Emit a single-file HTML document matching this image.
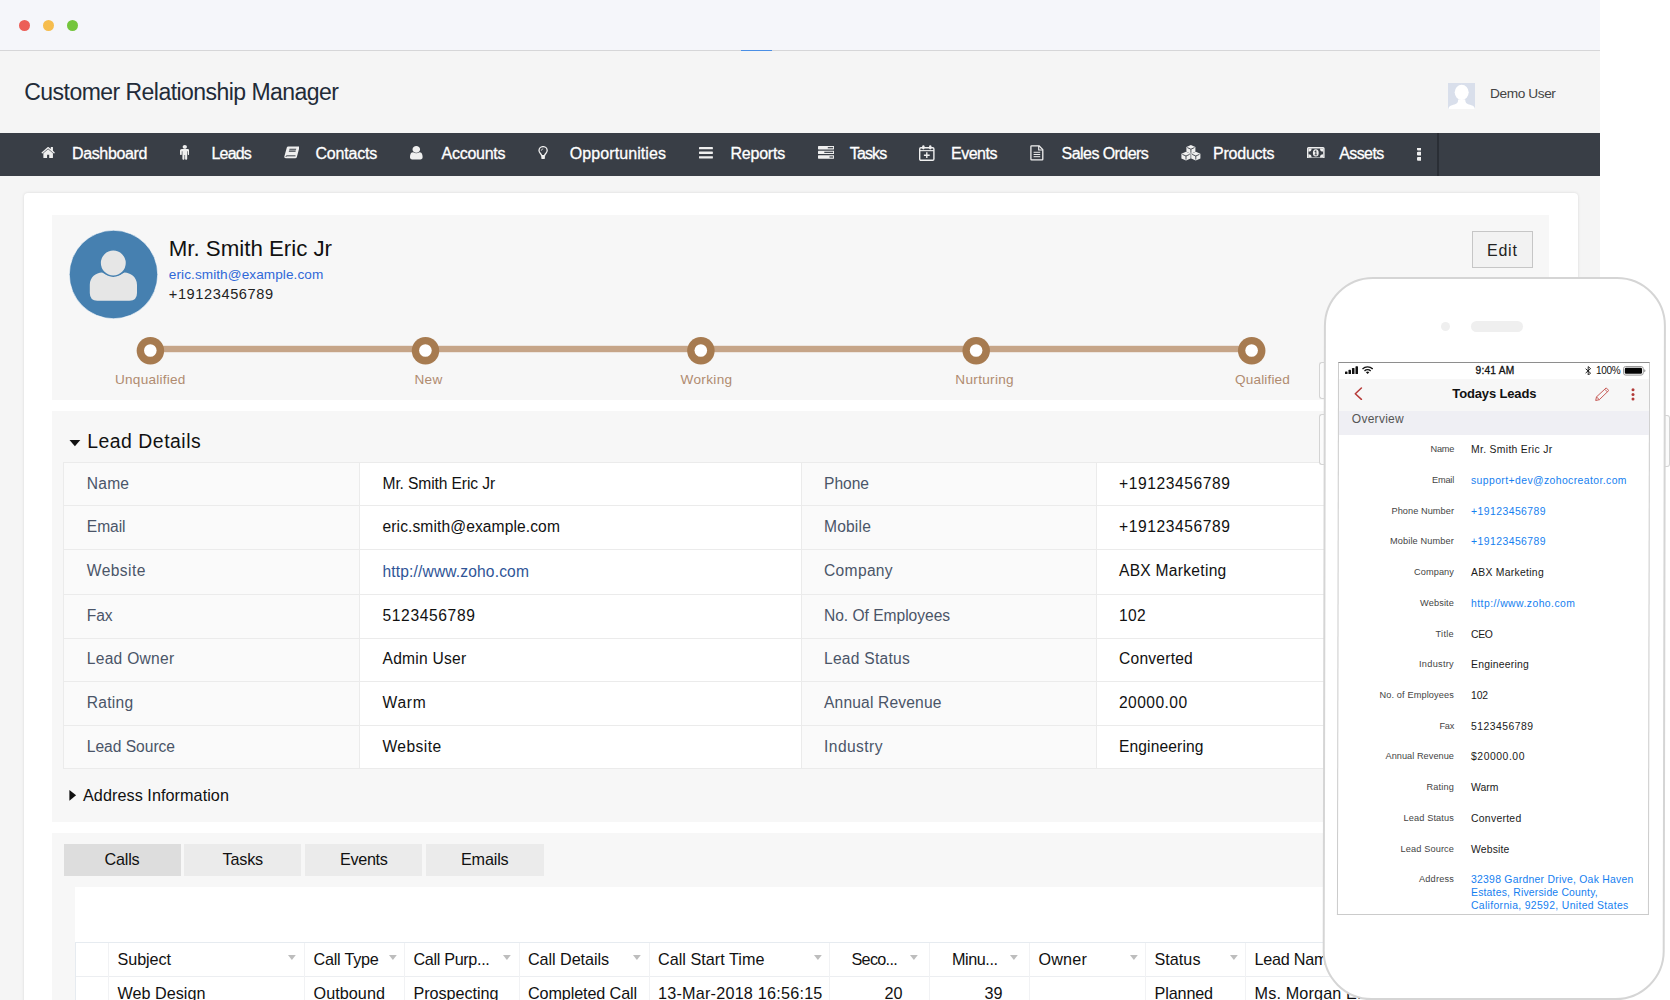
<!DOCTYPE html>
<html lang="en">
<head>
<meta charset="utf-8">
<title>Customer Relationship Manager</title>
<style>
html,body{margin:0;padding:0;background:#fff;}
body{width:1670px;height:1000px;position:relative;overflow:hidden;font-family:"Liberation Sans",sans-serif;}
.a{position:absolute;box-sizing:border-box;}
.t{position:absolute;white-space:pre;line-height:1;font-family:"Liberation Sans",sans-serif;}
#browser{left:0;top:0;width:1600px;height:1000px;background:#f5f5f5;overflow:hidden;}
#titlebar{left:0;top:0;width:1600px;height:51px;background:#f5f6fa;border-bottom:1px solid #d6d6d8;}
.dot{width:11px;height:11px;border-radius:50%;top:19.5px;}
#nav{left:0;top:133px;width:1600px;height:43px;background:#393e46;}
#card{left:24px;top:193px;width:1553.5px;height:820px;background:#fff;border-radius:4px;box-shadow:0 0 3px rgba(0,0,0,.12);}
.panel{left:52.3px;width:1497.2px;background:#f7f7f7;}
.tab{top:844px;height:32.4px;width:117.6px;background:#ebebeb;}
.vl{width:1px;background:#ebebeb;}
.hl{height:1px;background:#ebebeb;}
.gl{background:#e6ebf0 !important;}
.gv{background:#f1f2f4 !important;}
.lab{background:#fafafa;}
.val{background:#fff;}
.nv{-webkit-text-stroke:.3px #fff;}
.sb{-webkit-text-stroke:.3px #111;}
</style>
</head>
<body>
<div class="a" id="browser">
  <div class="a" id="titlebar"></div>
  <div class="a dot" style="left:19px;background:#ec5f58;"></div>
  <div class="a dot" style="left:43px;background:#f6bd4e;"></div>
  <div class="a dot" style="left:67px;background:#74c53c;"></div>
  <div class="a" style="left:740.5px;top:49.5px;width:31.5px;height:1.5px;background:#4a8fe6;"></div>
  <!-- user avatar -->
  <svg class="a" style="left:1448px;top:82.8px;" width="27.2" height="26.3" viewBox="0 0 27.2 26.3">
    <rect width="27.2" height="26.3" fill="#d9dfeb"/>
    <ellipse cx="13.7" cy="9.3" rx="7" ry="7.6" fill="#fff"/>
    <path d="M.4 26.3C.4 23.2 3 22.4 6.5 21.5 9 20.8 10.1 19.6 10.2 16.5H17.2C17.3 19.6 18.4 20.8 20.9 21.5 24.4 22.4 26.9 23.2 26.9 26.3z" fill="#fff"/>
  </svg>
  <div class="a" id="nav"></div>
  <div class="a" style="left:1437px;top:133px;width:1.5px;height:43px;background:#2a2e35;"></div>
    <!-- nav icons -->
  <svg class="a" id="ic-home" style="left:40.9px;top:147px;" width="14.3" height="11.1" viewBox="35 256 1722 1280" preserveAspectRatio="none"><path fill="#efefef" d="M1472 992v480q0 26-19 45t-45 19h-384v-384h-256v384h-384q-26 0-45-19t-19-45v-480q0-1 .5-3t.5-3l575-474 575 474q1 2 1 6zm223-69l-62 74q-8 9-21 11h-3q-13 0-21-7l-692-577-692 577q-12 8-24 7-13-2-21-11l-62-74q-8-10-7-23.5t11-21.5l719-599q32-26 76-26t76 26l244 204v-195q0-14 9-23t23-9h192q14 0 23 9t9 23v408l219 182q10 8 11 21.5t-7 23.5z"/></svg>
  <svg class="a" id="ic-male" style="left:179.8px;top:145.2px;" width="9.6" height="14.8" viewBox="384 32 1024 1760" preserveAspectRatio="none"><path fill="#efefef" d="M1408 704v416q0 40-28 68t-68 28-68-28-28-68v-352h-64v912q0 46-33 79t-79 33-79-33-33-79v-464h-64v464q0 46-33 79t-79 33-79-33-33-79v-912h-64v352q0 40-28 68t-68 28-68-28-28-68v-416q0-80 56-136t136-56h640q80 0 136 56t56 136zm-288-448q0 93-65.5 158.5t-158.5 65.5-158.5-65.5-65.5-158.5 65.5-158.5 158.5-65.5 158.5 65.5 65.5 158.5z"/></svg>
  <svg class="a" id="ic-book" style="left:283.7px;top:146.2px;" width="15.6" height="13.5" viewBox="0 0 16 13.5"><path fill="#efefef" d="M4.3 0.3H15q1.1 0 .8 1.1L13.2 11.2q-.4 1.3-1.7 1.3H2.3Q-.2 12.5.4 10.3L2.9 1.4Q3.2.3 4.3.3z"/><path fill="#393e46" d="M5.7 2.6h6.9l-.3 1.1H5.4zM5.2 4.5h6.9l-.3 1.1H4.9z"/><path fill="none" stroke="#393e46" stroke-width="1" d="M11.8 9.9H2.9q-1.1 0-.9 1"/></svg>
  <svg class="a" id="ic-user" style="left:410.2px;top:146px;" width="12.6" height="13.5" viewBox="256 128 1280 1536" preserveAspectRatio="none"><path fill="#efefef" d="M1536 1399q0 109-62.5 187t-150.5 78h-854q-88 0-150.5-78t-62.5-187q0-85 8.5-160.5t31.5-152 58.5-131 94-89 134.5-34.5q131 128 313 128t313-128q76 0 134.5 34.5t94 89 58.5 131 31.5 152 8.5 160.5zm-256-887q0 159-112.5 271.5t-271.5 112.5-271.5-112.5-112.5-271.5 112.5-271.5 271.5-112.5 271.5 112.5 112.5 271.5z"/></svg>
  <svg class="a" id="ic-bulb" style="left:538.1px;top:145.9px;" width="10.2" height="13.6" viewBox="0 0 10.2 13.6"><path fill="none" stroke="#efefef" stroke-width="1.3" d="M3.6 9.6C3.6 7.8 1 7 1 4.6A4.1 4 0 0 1 9.2 4.6C9.2 7 6.6 7.8 6.6 9.6z"/><path fill="#efefef" d="M3.3 9.6h3.6v2.3q0 1.4-1.8 1.4t-1.8-1.4z"/><path fill="none" stroke="#efefef" stroke-width=".7" d="M3.3 4.8A1.9 1.9 0 0 1 5.2 2.9"/></svg>
  <svg class="a" id="ic-bars" style="left:698.9px;top:147px;" width="13.9" height="11.5" viewBox="128 256 1536 1280" preserveAspectRatio="none"><path fill="#efefef" d="M1664 1344v128q0 26-19 45t-45 19h-1408q-26 0-45-19t-19-45v-128q0-26 19-45t45-19h1408q26 0 45 19t19 45zm0-512v128q0 26-19 45t-45 19h-1408q-26 0-45-19t-19-45v-128q0-26 19-45t45-19h1408q26 0 45 19t19 45zm0-512v128q0 26-19 45t-45 19h-1408q-26 0-45-19t-19-45v-128q0-26 19-45t45-19h1408q26 0 45 19t19 45z"/></svg>
  <svg class="a" id="ic-tasks" style="left:817.9px;top:145.9px;" width="16.2" height="12.7" viewBox="0 0 16.2 12.7"><g fill="#efefef"><rect x="0" y="0" width="16.2" height="3.4" rx=".6"/><rect x="0" y="4.65" width="16.2" height="3.4" rx=".6"/><rect x="0" y="9.3" width="16.2" height="3.4" rx=".6"/></g><g fill="#393e46"><rect x="9.8" y="1.1" width="5.3" height="1.2"/><rect x="6.3" y="5.75" width="8.8" height="1.2"/><rect x="11.5" y="10.4" width="3.6" height="1.2"/></g></svg>
  <svg class="a" id="ic-cal" style="left:919px;top:144.7px;" width="15.6" height="16" viewBox="0 0 15.6 16"><rect x=".7" y="2.7" width="14.2" height="12.6" rx="1.2" fill="none" stroke="#efefef" stroke-width="1.4"/><rect x=".7" y="5.1" width="14.2" height="1.1" fill="#efefef"/><rect x="3.2" y=".2" width="2.3" height="4.2" rx="1.1" fill="#efefef"/><rect x="10.1" y=".2" width="2.3" height="4.2" rx="1.1" fill="#efefef"/><path fill="#efefef" d="M7.1 7.3h1.4v2.2h2.2v1.4H8.5v2.2H7.1v-2.2H4.9V9.5h2.2z"/></svg>
  <svg class="a" id="ic-file" style="left:1029.7px;top:145px;" width="14.3" height="15.7" viewBox="0 0 14.3 15.7"><path fill="none" stroke="#efefef" stroke-width="1.3" stroke-linejoin="round" d="M1.6.8H9l3.8 3.8V14.2q0 .7-.7.7H1.6q-.7 0-.7-.7V1.5q0-.7.7-.7z"/><path fill="none" stroke="#efefef" stroke-width="1.1" d="M8.7.9V5h4"/><path fill="none" stroke="#efefef" stroke-width="1" d="M3.6 7.3h6.6M3.6 9.5h6.6M3.6 11.7h6.6"/></svg>
  <svg class="a" id="ic-cubes" style="left:1181.3px;top:145px;" width="19.8" height="15.5" viewBox="0 0 19.8 15.5"><g fill="#efefef"><path d="M9.9 0l4.5 2v4.7L9.9 8.7 5.4 6.7V2z"/><path d="M5 6.8l4.6 2v4.7L5 15.5.4 13.5V8.8z"/><path d="M14.8 6.8l4.6 2v4.7l-4.6 2-4.6-2V8.8z"/></g><g fill="none" stroke="#393e46" stroke-width=".9"><path d="M6.3 2.6l3.6 1.6 3.6-1.6M9.9 4.2v3.6"/><path d="M1.4 9.4L5 11l3.6-1.6M5 11v3.6"/><path d="M11.2 9.4l3.6 1.6 3.6-1.6M14.8 11v3.6"/></g></svg>
  <svg class="a" id="ic-money" style="left:1307.2px;top:146.7px;" width="17.6" height="11.8" viewBox="0 0 17.6 11.8"><rect x=".7" y=".7" width="16.2" height="10.4" rx=".8" fill="none" stroke="#efefef" stroke-width="1.4"/><path fill="#efefef" d="M1.4 1.4h3.2A3.2 3.2 0 0 1 1.4 4.6zM16.2 1.4h-3.2A3.2 3.2 0 0 0 16.2 4.6zM1.4 10.4h3.2A3.2 3.2 0 0 0 1.4 7.2zM16.2 10.4h-3.2A3.2 3.2 0 0 1 16.2 7.2z"/><ellipse cx="8.8" cy="5.9" rx="2.9" ry="3.6" fill="#efefef"/><path fill="#393e46" d="M8.4 3.6h1v3.8h.8v.8H7.5v-.8h.9V4.8l-.8.4v-.9z"/></svg>
  <svg class="a" id="ic-kebab" style="left:1416.6px;top:148px;" width="4.8" height="12.7" viewBox="704 256 384 1280" preserveAspectRatio="none"><path fill="#efefef" d="M1088 1248v192q0 40-28 68t-68 28h-192q-40 0-68-28t-28-68v-192q0-40 28-68t68-28h192q40 0 68 28t28 68zm0-512v192q0 40-28 68t-68 28h-192q-40 0-68-28t-28-68v-192q0-40 28-68t68-28h192q40 0 68 28t28 68zm0-512v192q0 40-28 68t-68 28h-192q-40 0-68-28t-28-68v-192q0-40 28-68t68-28h192q40 0 68 28t28 68z"/></svg>

  <div class="a" id="card"></div>
  <!-- panel 1: profile -->
  <div class="a panel" style="top:214.7px;height:185.3px;"></div>
  <svg class="a" style="left:68.9px;top:230.3px;" width="89" height="89" viewBox="0 0 89 89">
    <circle cx="44.5" cy="44.5" r="44.2" fill="#4680b0" stroke="#fff" stroke-width=".6"/>
    <path d="M20.8 63V55C20.8 47 27 43 33 42.6Q44.4 50 55.5 42.6C61.5 43 68 47 68 55V63Q68 70.7 60.5 70.7H28.3Q20.8 70.7 20.8 63z" fill="#e6e6e6"/>
    <circle cx="44.3" cy="33" r="13.2" fill="#e6e6e6" stroke="#4680b0" stroke-width="1.5"/>
  </svg>
  <svg class="a" style="left:130px;top:330px;" width="1140" height="42" viewBox="130 330 1140 42">
    <rect x="150" y="345.8" width="1101" height="6.4" fill="#c6a588"/>
    <circle cx="150.4" cy="350.7" r="13.75" fill="#a77b50"/><circle cx="150.3" cy="350.5" r="6.3" fill="#fff"/>
    <circle cx="425.5" cy="350.7" r="13.75" fill="#a77b50"/><circle cx="425.4" cy="350.5" r="6.3" fill="#fff"/>
    <circle cx="700.9" cy="350.7" r="13.75" fill="#a77b50"/><circle cx="700.8" cy="350.5" r="6.3" fill="#fff"/>
    <circle cx="976.2" cy="350.7" r="13.75" fill="#a77b50"/><circle cx="976.1" cy="350.5" r="6.3" fill="#fff"/>
    <circle cx="1251.7" cy="350.7" r="13.75" fill="#a77b50"/><circle cx="1251.6000000000001" cy="350.5" r="6.3" fill="#fff"/>
  </svg>
  <div class="a" style="left:1472px;top:231px;width:61px;height:37px;border:1px solid #c6c6c6;background:#f2f2f2;"></div>
  <!-- panel 2: lead details -->
  <div class="a panel" style="top:411.4px;height:410.2px;"></div>
  <svg class="a" style="left:68px;top:438px;" width="14" height="10" viewBox="68 438 14 10"><path d="M69.5 440h10.8l-5.4 6.2z" fill="#111"/></svg>
  <svg class="a" style="left:68px;top:788px;" width="10" height="14" viewBox="68 788 10 14"><path d="M69.4 789.9v10.8l6.7-5.4z" fill="#111"/></svg>
  <!-- table -->
  <div class="a lab" style="left:63px;top:462px;width:296px;height:306.5px;"></div>
  <div class="a val" style="left:359px;top:462px;width:442px;height:306.5px;"></div>
  <div class="a lab" style="left:801px;top:462px;width:295px;height:306.5px;"></div>
  <div class="a val" style="left:1096px;top:462px;width:442px;height:306.5px;"></div>
  <div class="a vl" style="left:63px;top:462px;height:306.5px;"></div>
  <div class="a vl" style="left:359px;top:462px;height:306.5px;"></div>
  <div class="a vl" style="left:801px;top:462px;height:306.5px;"></div>
  <div class="a vl" style="left:1096px;top:462px;height:306.5px;"></div>
  <div class="a hl" style="left:63px;top:462px;width:1475px;"></div>
  <div class="a hl" style="left:63px;top:505px;width:1475px;"></div>
  <div class="a hl" style="left:63px;top:549px;width:1475px;"></div>
  <div class="a hl" style="left:63px;top:593.5px;width:1475px;"></div>
  <div class="a hl" style="left:63px;top:637.5px;width:1475px;"></div>
  <div class="a hl" style="left:63px;top:681px;width:1475px;"></div>
  <div class="a hl" style="left:63px;top:724.5px;width:1475px;"></div>
  <div class="a hl" style="left:63px;top:768px;width:1475px;"></div>
  <!-- panel 3: related lists -->
  <div class="a panel" style="top:833px;height:180px;"></div>
  <div class="a tab" style="left:63.6px;background:#dddddd;"></div>
  <div class="a tab" style="left:183.6px;"></div>
  <div class="a tab" style="left:304.8px;"></div>
  <div class="a tab" style="left:426px;"></div>
  <div class="a" style="left:74.7px;top:887.2px;width:1463px;height:120px;background:#fff;"></div>
  <div class="a hl gl" style="left:75px;top:942px;width:1463px;"></div>
  <div class="a hl gl" style="left:75px;top:976px;width:1463px;background:#eceef1 !important;"></div>
  <div class="a vl gl" style="left:75px;top:943px;height:60px;"></div>
  <div class="a vl gv" style="left:108px;top:943px;height:60px;"></div>
  <div class="a vl gv" style="left:304px;top:943px;height:60px;"></div>
  <div class="a vl gv" style="left:404px;top:943px;height:60px;"></div>
  <div class="a vl gv" style="left:518.6px;top:943px;height:60px;"></div>
  <div class="a vl gv" style="left:649px;top:943px;height:60px;"></div>
  <div class="a vl gv" style="left:829px;top:943px;height:60px;"></div>
  <div class="a vl gv" style="left:928.6px;top:943px;height:60px;"></div>
  <div class="a vl gv" style="left:1028.6px;top:943px;height:60px;"></div>
  <div class="a vl gv" style="left:1144.6px;top:943px;height:60px;"></div>
  <div class="a vl gv" style="left:1244.6px;top:943px;height:60px;"></div>
  <svg class="a" style="left:287px;top:954px;" width="10" height="7" viewBox="0 0 10 7"><path d="M1 1h7.8L4.9 5.9z" fill="#bdbdbd"/></svg>
  <svg class="a" style="left:387.5px;top:954px;" width="10" height="7" viewBox="0 0 10 7"><path d="M1 1h7.8L4.9 5.9z" fill="#bdbdbd"/></svg>
  <svg class="a" style="left:501.7px;top:954px;" width="10" height="7" viewBox="0 0 10 7"><path d="M1 1h7.8L4.9 5.9z" fill="#bdbdbd"/></svg>
  <svg class="a" style="left:631.7px;top:954px;" width="10" height="7" viewBox="0 0 10 7"><path d="M1 1h7.8L4.9 5.9z" fill="#bdbdbd"/></svg>
  <svg class="a" style="left:812.5px;top:954px;" width="10" height="7" viewBox="0 0 10 7"><path d="M1 1h7.8L4.9 5.9z" fill="#bdbdbd"/></svg>
  <svg class="a" style="left:908.7px;top:954px;" width="10" height="7" viewBox="0 0 10 7"><path d="M1 1h7.8L4.9 5.9z" fill="#bdbdbd"/></svg>
  <svg class="a" style="left:1008.7px;top:954px;" width="10" height="7" viewBox="0 0 10 7"><path d="M1 1h7.8L4.9 5.9z" fill="#bdbdbd"/></svg>
  <svg class="a" style="left:1128.5px;top:954px;" width="10" height="7" viewBox="0 0 10 7"><path d="M1 1h7.8L4.9 5.9z" fill="#bdbdbd"/></svg>
  <svg class="a" style="left:1228.5px;top:954px;" width="10" height="7" viewBox="0 0 10 7"><path d="M1 1h7.8L4.9 5.9z" fill="#bdbdbd"/></svg>
<span class="t " style="left:24.3px;top:81.00px;font-size:23px;color:#222b38;letter-spacing:-0.54px;">Customer Relationship Manager</span>
<span class="t " style="left:1490.0px;top:87.00px;font-size:13.7px;color:#444;letter-spacing:-0.41px;">Demo User</span>
<span class="t nv" style="left:72.0px;top:146.00px;font-size:16px;color:#ffffff;letter-spacing:-0.36px;">Dashboard</span>
<span class="t nv" style="left:211.5px;top:146.00px;font-size:16px;color:#ffffff;letter-spacing:-0.82px;">Leads</span>
<span class="t nv" style="left:315.5px;top:146.00px;font-size:16px;color:#ffffff;letter-spacing:-0.21px;">Contacts</span>
<span class="t nv" style="left:441.5px;top:146.00px;font-size:16px;color:#ffffff;letter-spacing:-0.25px;">Accounts</span>
<span class="t nv" style="left:569.8px;top:146.00px;font-size:16px;color:#ffffff;letter-spacing:0.08px;">Opportunities</span>
<span class="t nv" style="left:730.5px;top:146.00px;font-size:16px;color:#ffffff;letter-spacing:-0.22px;">Reports</span>
<span class="t nv" style="left:849.8px;top:146.00px;font-size:16px;color:#ffffff;letter-spacing:-0.88px;">Tasks</span>
<span class="t nv" style="left:951.0px;top:146.00px;font-size:16px;color:#ffffff;letter-spacing:-0.49px;">Events</span>
<span class="t nv" style="left:1061.6px;top:146.00px;font-size:16px;color:#ffffff;letter-spacing:-0.56px;">Sales Orders</span>
<span class="t nv" style="left:1213.0px;top:146.00px;font-size:16px;color:#ffffff;letter-spacing:-0.23px;">Products</span>
<span class="t nv" style="left:1339.2px;top:146.00px;font-size:16px;color:#ffffff;letter-spacing:-0.59px;">Assets</span>
<span class="t " style="left:168.8px;top:238.00px;font-size:22.3px;color:#111;letter-spacing:-0.02px;">Mr. Smith Eric Jr</span>
<span class="t " style="left:168.8px;top:268.00px;font-size:13.6px;color:#2f68d8;letter-spacing:0.08px;">eric.smith@example.com</span>
<span class="t " style="left:168.8px;top:287.00px;font-size:14.6px;color:#222;letter-spacing:0.59px;">+19123456789</span>
<span class="t " style="left:115.0px;top:373.00px;font-size:13.6px;color:#b08b70;letter-spacing:0.23px;">Unqualified</span>
<span class="t " style="left:414.5px;top:373.00px;font-size:13.6px;color:#b08b70;letter-spacing:0.27px;">New</span>
<span class="t " style="left:680.5px;top:373.00px;font-size:13.6px;color:#b08b70;letter-spacing:0.34px;">Working</span>
<span class="t " style="left:955.3px;top:373.00px;font-size:13.6px;color:#b08b70;letter-spacing:0.31px;">Nurturing</span>
<span class="t " style="left:1235.0px;top:373.00px;font-size:13.6px;color:#b08b70;letter-spacing:0.15px;">Qualified</span>
<span class="t " style="left:1487.0px;top:243.00px;font-size:16px;color:#222;letter-spacing:0.76px;">Edit</span>
<span class="t " style="left:87.2px;top:432.00px;font-size:19.4px;color:#111;letter-spacing:0.52px;">Lead Details</span>
<span class="t " style="left:86.8px;top:476.00px;font-size:15.6px;color:#4a5568;letter-spacing:0.2px;">Name</span>
<span class="t " style="left:382.5px;top:476.00px;font-size:15.6px;color:#111;letter-spacing:-0.11px;">Mr. Smith Eric Jr</span>
<span class="t " style="left:824.0px;top:476.00px;font-size:15.6px;color:#4a5568;letter-spacing:-0.02px;">Phone</span>
<span class="t " style="left:1119.0px;top:476.00px;font-size:15.6px;color:#111;letter-spacing:0.58px;">+19123456789</span>
<span class="t " style="left:86.8px;top:519.00px;font-size:15.6px;color:#4a5568;letter-spacing:-0.06px;">Email</span>
<span class="t " style="left:382.5px;top:519.00px;font-size:15.6px;color:#111;letter-spacing:0.1px;">eric.smith@example.com</span>
<span class="t " style="left:824.0px;top:519.00px;font-size:15.6px;color:#4a5568;letter-spacing:0.18px;">Mobile</span>
<span class="t " style="left:1119.0px;top:519.00px;font-size:15.6px;color:#111;letter-spacing:0.58px;">+19123456789</span>
<span class="t " style="left:86.8px;top:563.00px;font-size:15.6px;color:#4a5568;letter-spacing:0.41px;">Website</span>
<span class="t " style="left:382.5px;top:564.00px;font-size:15.6px;color:#2f5597;letter-spacing:0.14px;">http://www.zoho.com</span>
<span class="t " style="left:824.0px;top:563.00px;font-size:15.6px;color:#4a5568;letter-spacing:0.32px;">Company</span>
<span class="t " style="left:1119.0px;top:563.00px;font-size:15.6px;color:#111;letter-spacing:0.27px;">ABX Marketing</span>
<span class="t " style="left:86.8px;top:608.00px;font-size:15.6px;color:#4a5568;letter-spacing:-0.1px;">Fax</span>
<span class="t " style="left:382.5px;top:608.00px;font-size:15.6px;color:#111;letter-spacing:0.63px;">5123456789</span>
<span class="t " style="left:824.0px;top:608.00px;font-size:15.6px;color:#4a5568;letter-spacing:-0.03px;">No. Of Employees</span>
<span class="t " style="left:1119.0px;top:608.00px;font-size:15.6px;color:#111;letter-spacing:0.32px;">102</span>
<span class="t " style="left:86.8px;top:651.00px;font-size:15.6px;color:#4a5568;letter-spacing:0.27px;">Lead Owner</span>
<span class="t " style="left:382.5px;top:651.00px;font-size:15.6px;color:#111;letter-spacing:0.25px;">Admin User</span>
<span class="t " style="left:824.0px;top:651.00px;font-size:15.6px;color:#4a5568;letter-spacing:0.25px;">Lead Status</span>
<span class="t " style="left:1119.0px;top:651.00px;font-size:15.6px;color:#111;letter-spacing:0.23px;">Converted</span>
<span class="t " style="left:86.8px;top:695.00px;font-size:15.6px;color:#4a5568;letter-spacing:0.27px;">Rating</span>
<span class="t " style="left:382.5px;top:695.00px;font-size:15.6px;color:#111;letter-spacing:0.75px;">Warm</span>
<span class="t " style="left:824.0px;top:695.00px;font-size:15.6px;color:#4a5568;letter-spacing:0.16px;">Annual Revenue</span>
<span class="t " style="left:1119.0px;top:695.00px;font-size:15.6px;color:#111;letter-spacing:0.43px;">20000.00</span>
<span class="t " style="left:86.8px;top:739.00px;font-size:15.6px;color:#4a5568;letter-spacing:-0.02px;">Lead Source</span>
<span class="t " style="left:382.5px;top:739.00px;font-size:15.6px;color:#111;letter-spacing:0.42px;">Website</span>
<span class="t " style="left:824.0px;top:739.00px;font-size:15.6px;color:#4a5568;letter-spacing:0.44px;">Industry</span>
<span class="t " style="left:1119.0px;top:739.00px;font-size:15.6px;color:#111;letter-spacing:0.12px;">Engineering</span>
<span class="t " style="left:83.0px;top:787.00px;font-size:16.2px;color:#111;letter-spacing:0.06px;">Address Information</span>
<span class="t " style="left:104.5px;top:851.00px;font-size:16.2px;color:#111;letter-spacing:-0.2px;">Calls</span>
<span class="t " style="left:222.5px;top:851.00px;font-size:16.2px;color:#111;letter-spacing:-0.18px;">Tasks</span>
<span class="t " style="left:340.0px;top:851.00px;font-size:16.2px;color:#111;letter-spacing:-0.33px;">Events</span>
<span class="t " style="left:461.0px;top:851.00px;font-size:16.2px;color:#111;letter-spacing:-0.18px;">Emails</span>
<span class="t " style="left:117.5px;top:951.00px;font-size:16.2px;color:#111;letter-spacing:-0.07px;">Subject</span>
<span class="t " style="left:313.5px;top:951.00px;font-size:16.2px;color:#111;letter-spacing:-0.24px;">Call Type</span>
<span class="t " style="left:413.5px;top:951.00px;font-size:16.2px;color:#111;letter-spacing:-0.34px;">Call Purp...</span>
<span class="t " style="left:528.0px;top:951.00px;font-size:16.2px;color:#111;letter-spacing:-0.07px;">Call Details</span>
<span class="t " style="left:658.0px;top:951.00px;font-size:16.2px;color:#111;letter-spacing:0.02px;">Call Start Time</span>
<span class="t " style="left:851.5px;top:951.00px;font-size:16.2px;color:#111;letter-spacing:-0.7px;">Seco...</span>
<span class="t " style="left:952.0px;top:951.00px;font-size:16.2px;color:#111;letter-spacing:-0.44px;">Minu...</span>
<span class="t " style="left:1038.5px;top:951.00px;font-size:16.2px;color:#111;letter-spacing:0.16px;">Owner</span>
<span class="t " style="left:1154.5px;top:951.00px;font-size:16.2px;color:#111;letter-spacing:0.02px;">Status</span>
<span class="t " style="left:1254.5px;top:951.00px;font-size:16.2px;color:#111;letter-spacing:-0.24px;">Lead Name</span>
<span class="t " style="left:117.5px;top:985.00px;font-size:16.2px;color:#111;letter-spacing:0.01px;">Web Design</span>
<span class="t " style="left:313.5px;top:985.00px;font-size:16.2px;color:#111;letter-spacing:0.05px;">Outbound</span>
<span class="t " style="left:413.5px;top:985.00px;font-size:16.2px;color:#111;letter-spacing:-0.04px;">Prospecting</span>
<span class="t " style="left:528.0px;top:985.00px;font-size:16.2px;color:#111;letter-spacing:-0.12px;">Completed Call</span>
<span class="t " style="left:658.0px;top:985.00px;font-size:16.2px;color:#111;letter-spacing:0.22px;">13-Mar-2018 16:56:15</span>
<span class="t " style="left:884.5px;top:985.00px;font-size:16.2px;color:#111;letter-spacing:-0.01px;">20</span>
<span class="t " style="left:984.5px;top:985.00px;font-size:16.2px;color:#111;letter-spacing:-0.01px;">39</span>
<span class="t " style="left:1154.5px;top:985.00px;font-size:16.2px;color:#111;letter-spacing:-0.13px;">Planned</span>
<span class="t " style="left:1254.5px;top:985.00px;font-size:16.2px;color:#111;letter-spacing:0.15px;">Ms. Morgan E...</span>
</div>
<!-- phone -->
<!-- phone side buttons -->
<div class="a" style="left:1319.2px;top:362.4px;width:6px;height:36.5px;border:1px solid #d4d4d4;border-right:none;border-radius:3px 0 0 3px;background:#fbfbfb;"></div>
<div class="a" style="left:1319.2px;top:414.2px;width:6px;height:51px;border:1px solid #d4d4d4;border-right:none;border-radius:3px 0 0 3px;background:#fbfbfb;"></div>
<div class="a" style="left:1664px;top:415px;width:5.8px;height:52px;border:1px solid #d4d4d4;border-left:none;border-radius:0 3px 3px 0;background:#fbfbfb;"></div>

<div class="a" id="phone" style="left:1323.9px;top:277px;width:341.5px;height:723px;border:2px solid #d5d5d5;border-radius:49px;transform-origin:0 0;transform:skewX(-.11deg);background:#fff;"></div>
<div class="a" style="left:1441.3px;top:321.5px;width:9px;height:9px;border-radius:50%;background:#efefef;"></div>
<div class="a" style="left:1471px;top:320.5px;width:51.5px;height:11.5px;border-radius:6px;background:#efefef;"></div>
<div class="a" id="screen" style="transform-origin:0 0;transform:skewX(-.11deg);left:1338.2px;top:362px;width:312px;height:552.5px;border:1px solid #cbcbcb;border-top-color:#8e8e8e;background:#fff;"></div>
<div class="a" style="left:1339px;top:378.5px;width:310px;height:32.5px;background:#f7f7f7;"></div>
<div class="a" style="left:1339px;top:411px;width:310px;height:23.5px;background:#efeff4;"></div>
<!-- status bar icons -->
<svg class="a" style="left:1345px;top:365.5px;" width="13.2" height="8.2" viewBox="0 0 13.2 8.2"><g fill="#111"><rect x="0" y="5.5" width="2.5" height="2.7" rx=".6"/><rect x="3.5" y="3.8" width="2.5" height="4.4" rx=".6"/><rect x="7" y="2" width="2.5" height="6.2" rx=".6"/><rect x="10.5" y=".3" width="2.5" height="7.9" rx=".6"/></g></svg>
<svg class="a" style="left:1362.2px;top:365.7px;" width="11.2" height="8" viewBox="0 0 11.2 8"><g fill="none" stroke="#111" stroke-width="1.35" stroke-linecap="butt"><path d="M.5 3A7.3 7.3 0 0 1 10.7 3"/><path d="M2.5 5A4.5 4.5 0 0 1 8.7 5"/></g><path fill="#111" d="M5.6 8L3.9 6.3A2.4 2.4 0 0 1 7.3 6.3z"/></svg>
<svg class="a" style="left:1584.7px;top:365.5px;" width="6.6" height="9.8" viewBox="0 0 6.6 9.8"><path fill="none" stroke="#111" stroke-width=".9" stroke-linejoin="miter" d="M.6 2.7L5.6 7.2 3.2 9.2V.6L5.6 2.6.6 7.1"/></svg>
<svg class="a" style="left:1623px;top:366px;" width="23" height="9.6" viewBox="0 0 23 9.6"><rect x=".5" y=".5" width="19.8" height="8.6" rx="2.2" fill="#fff" stroke="#999" stroke-width="1"/><rect x="1.8" y="1.8" width="17.2" height="6" rx="1.2" fill="#050505"/><path fill="#999" d="M21.1 3.3q1.4.4 1.4 1.5t-1.4 1.5z"/></svg>
<!-- nav bar icons -->
<svg class="a" style="left:1354.4px;top:386.6px;" width="8.6" height="13.4" viewBox="0 0 8.6 13.4"><path fill="none" stroke="#b73a38" stroke-width="1.5" stroke-linecap="round" stroke-linejoin="round" d="M7.4 1L1.3 6.8 7.4 12.4"/></svg>
<svg class="a" style="left:1594.5px;top:386.8px;" width="14.8" height="14" viewBox="0 0 14.8 14"><g fill="none" stroke="#c4524e" stroke-width=".95" stroke-linejoin="round"><path d="M11.2.9l2.6 2.6L4.3 12.7.7 13.5l.8-3.6z"/><path d="M9.8 2.3l2.6 2.6M1.5 9.9l2.8 2.8"/></g></svg>
<svg class="a" style="left:1630.7px;top:387.5px;" width="4" height="13" viewBox="0 0 4 13"><g fill="#b23a38"><circle cx="2" cy="1.8" r="1.5"/><circle cx="2" cy="6.4" r="1.5"/><circle cx="2" cy="11" r="1.5"/></g></svg>

<span class="t sb" style="left:1475.5px;top:366.00px;font-size:10.2px;color:#111;letter-spacing:0.23px;">9:41 AM</span>
<span class="t " style="left:1596.0px;top:366.00px;font-size:10px;color:#111;letter-spacing:-0.27px;">100%</span>
<span class="t " style="left:1452.3px;top:387.00px;font-size:13px;color:#111;font-weight:700;letter-spacing:-0.14px;">Todays Leads</span>
<span class="t " style="left:1351.8px;top:413.00px;font-size:12px;color:#555;letter-spacing:0.27px;">Overview</span>
<span class="t " style="left:1430.5px;top:445.00px;font-size:9.2px;color:#444;letter-spacing:-0.25px;">Name</span>
<span class="t " style="left:1471.0px;top:445.00px;font-size:10.4px;color:#1a1a1a;letter-spacing:0.31px;">Mr. Smith Eric Jr</span>
<span class="t " style="left:1432.0px;top:476.00px;font-size:9.2px;color:#444;letter-spacing:-0.2px;">Email</span>
<span class="t " style="left:1471.0px;top:476.00px;font-size:10.4px;color:#1580f0;letter-spacing:0.41px;">support+dev@zohocreator.com</span>
<span class="t " style="left:1391.5px;top:507.00px;font-size:9.2px;color:#444;letter-spacing:0.06px;">Phone Number</span>
<span class="t " style="left:1471.0px;top:507.00px;font-size:10.4px;color:#1580f0;letter-spacing:0.45px;">+19123456789</span>
<span class="t " style="left:1390.0px;top:537.00px;font-size:9.2px;color:#444;letter-spacing:0.13px;">Mobile Number</span>
<span class="t " style="left:1471.0px;top:537.00px;font-size:10.4px;color:#1580f0;letter-spacing:0.45px;">+19123456789</span>
<span class="t " style="left:1414.0px;top:568.00px;font-size:9.2px;color:#444;letter-spacing:0.1px;">Company</span>
<span class="t " style="left:1471.0px;top:568.00px;font-size:10.4px;color:#1a1a1a;letter-spacing:0.28px;">ABX Marketing</span>
<span class="t " style="left:1420.0px;top:599.00px;font-size:9.2px;color:#444;letter-spacing:0.14px;">Website</span>
<span class="t " style="left:1471.0px;top:599.00px;font-size:10.4px;color:#1580f0;letter-spacing:0.45px;">http://www.zoho.com</span>
<span class="t " style="left:1435.5px;top:630.00px;font-size:9.2px;color:#444;letter-spacing:0.3px;">Title</span>
<span class="t " style="left:1471.0px;top:630.00px;font-size:10.4px;color:#1a1a1a;letter-spacing:-0.34px;">CEO</span>
<span class="t " style="left:1419.0px;top:660.00px;font-size:9.2px;color:#444;letter-spacing:0.29px;">Industry</span>
<span class="t " style="left:1471.0px;top:660.00px;font-size:10.4px;color:#1a1a1a;letter-spacing:0.23px;">Engineering</span>
<span class="t " style="left:1379.5px;top:691.00px;font-size:9.2px;color:#444;letter-spacing:0.12px;">No. of Employees</span>
<span class="t " style="left:1471.0px;top:691.00px;font-size:10.4px;color:#1a1a1a;letter-spacing:-0.11px;">102</span>
<span class="t " style="left:1439.5px;top:722.00px;font-size:9.2px;color:#444;letter-spacing:-0.28px;">Fax</span>
<span class="t " style="left:1471.0px;top:722.00px;font-size:10.4px;color:#1a1a1a;letter-spacing:0.47px;">5123456789</span>
<span class="t " style="left:1385.5px;top:752.00px;font-size:9.2px;color:#444;letter-spacing:0.04px;">Annual Revenue</span>
<span class="t " style="left:1471.0px;top:752.00px;font-size:10.4px;color:#1a1a1a;letter-spacing:0.54px;">$20000.00</span>
<span class="t " style="left:1426.5px;top:783.00px;font-size:9.2px;color:#444;letter-spacing:0.16px;">Rating</span>
<span class="t " style="left:1471.0px;top:783.00px;font-size:10.4px;color:#1a1a1a;letter-spacing:0.04px;">Warm</span>
<span class="t " style="left:1403.5px;top:814.00px;font-size:9.2px;color:#444;letter-spacing:0.13px;">Lead Status</span>
<span class="t " style="left:1471.0px;top:814.00px;font-size:10.4px;color:#1a1a1a;letter-spacing:0.28px;">Converted</span>
<span class="t " style="left:1400.5px;top:845.00px;font-size:9.2px;color:#444;letter-spacing:0.13px;">Lead Source</span>
<span class="t " style="left:1471.0px;top:845.00px;font-size:10.4px;color:#1a1a1a;letter-spacing:0.16px;">Website</span>
<span class="t " style="left:1419.0px;top:875.00px;font-size:9.2px;color:#444;letter-spacing:0.18px;">Address</span>
<span class="t " style="left:1471.0px;top:875.00px;font-size:10.4px;color:#1580f0;letter-spacing:0.26px;">32398 Gardner Drive, Oak Haven</span>
<span class="t " style="left:1471.0px;top:888.00px;font-size:10.4px;color:#1580f0;letter-spacing:0.2px;">Estates, Riverside County,</span>
<span class="t " style="left:1471.0px;top:901.00px;font-size:10.4px;color:#1580f0;letter-spacing:0.34px;">California, 92592, United States</span>
</body>
</html>
